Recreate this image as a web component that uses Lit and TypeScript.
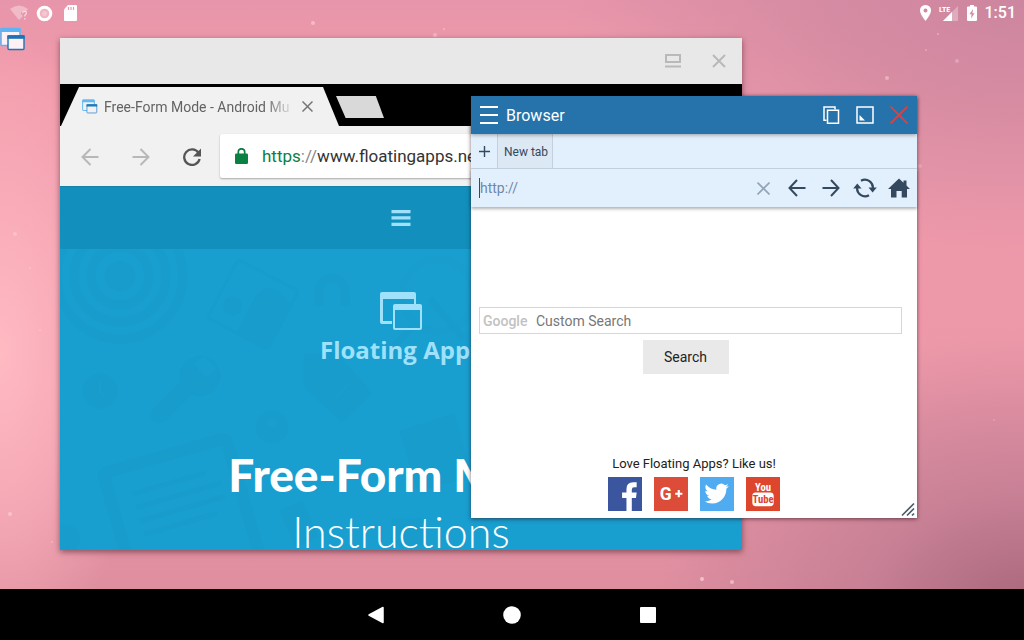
import { LitElement, html, css, svg } from "lit";
import { customElement, property } from "lit/decorators.js";

const twoWindows = (back: string, front: string, fill: string, frontBar = front) => svg`
  <path d="M1.5 1h18v3.5h-18z" fill=${back} />
  <rect x="1" y="1.5" width="19" height="17" rx="1" fill=${fill} stroke=${back} stroke-width="1.6" />
  <path d="M.5 1h20v4H.5z" fill=${back} />
  <rect x="8" y="9" width="16" height="13.5" rx="1" fill=${fill} stroke=${front} stroke-width="1.4" />
  <path d="M7.3 8.2h17.4v3.6H7.3z" fill=${frontBar} />`;

const reset = css`
  :host { box-sizing: border-box; font-family: Roboto, sans-serif; }
  *, *::before, *::after { box-sizing: border-box; }
  button { border: 0; padding: 0; margin: 0; background: none; font: inherit; color: inherit; display: grid; place-items: center; cursor: pointer; }
  input { border: 0; padding: 0; margin: 0; background: none; font: inherit; outline: 0; min-width: 0; }
  svg { display: block; }
`;

@customElement("status-bar")
class StatusBar extends LitElement {
  @property() time = "1:51";
  static styles = [reset, css`
    :host { display: flex; align-items: center; justify-content: space-between; height: 26px; padding: 0 8px 0 10px; color: #fff; }
    .group { display: flex; align-items: center; gap: 8px; }
    .time { font-size: 16px; font-weight: 500; line-height: 26px; }
    .lte { font-size: 8px; font-weight: 700; font-family: "Roboto Condensed", Roboto, sans-serif; }
  `];
  render() {
    return html`
      <div class="group">
        <svg width="18" height="16" viewBox="0 0 18 16"><path d="M0 4Q9-3 18 4L16 7Q11 5 11 9L13 11 9 15Z" fill="#fff" opacity=".35"/><path d="M12.5 8.2q.2-1.800 2-1.800t2 1.700q0 1.200-1.700 2.200v1.300M14.800 13v1.400" fill="none" stroke="#fff" stroke-width="1.200" opacity=".65"/></svg>
        <svg width="17" height="17" viewBox="0 0 17 17"><circle cx="8.500" cy="8.500" r="6.300" fill="#fff" fill-opacity=".3" stroke="#fff" stroke-width="3"/><circle cx="8.500" cy="8.500" r="2.500" fill="#fff" opacity=".25"/></svg>
        <svg width="18" height="16" viewBox="0 0 18 16"><path d="M7 0h8q1 0 1 1v14q0 1-1 1H4q-1 0-1-1V4.500z" fill="#fff"/><path d="M7.500 2v3M10 2v3M12.500 2v3" stroke="#e79ab0" stroke-width="1.200"/></svg>
      </div>
      <div class="group">
        <svg width="11" height="16" viewBox="0 0 11 16"><path fill-rule="evenodd" d="M5.500 0A5.300 5.300 0 0 1 11 5.500Q11 9 5.500 16Q0 9 0 5.500A5.300 5.300 0 0 1 5.500 0M5.500 3.500a2 2 0 1 0 0 4a2 2 0 0 0 0-4" fill="#fff"/></svg>
        <svg width="20" height="18" viewBox="0 0 20 18"><path d="M19 2v15H4z" fill="#fff" opacity=".3"/><path d="M13 8v9H4z" fill="#fff"/><text class="lte" x="0" y="8" fill="#fff">LTE</text></svg>
        <svg width="10" height="16" viewBox="0 0 10 16"><path fill="#fff" d="M3 0h4v1.500h2q1 0 1 1V15q0 1-1 1H1q-1 0-1-1V2.500q0-1 1-1h2z"/><path d="M6 4L2.500 9.300H4.600L4 13.500 7.600 8.200H5.500z" fill="#d58aa2"/></svg>
        <span class="time">${this.time}</span>
      </div>`;
  }
}

@customElement("chrome-window")
class ChromeWindow extends LitElement {
  static styles = [reset, css`
    :host { display: flex; flex-direction: column; overflow: hidden; background: #f1f1f1; box-shadow: 0 2px 6px rgba(60, 20, 30, .55); }
    .caption { flex: none; display: flex; justify-content: flex-end; align-items: center; height: 46px; background: #e8e8e8; }
    .caption button { width: 46px; height: 46px; color: #b9b9b9; }
    .strip { flex: none; display: flex; align-items: flex-end; height: 42px; background: #000; padding-left: 1px; }
    .tab { display: flex; align-items: center; width: 278px; height: 39px; padding: 0 24px 0 21px; background: #f1f1f1; clip-path: polygon(18px 0, calc(100% - 16px) 0, 100% 100%, 0 100%); }
    .label { flex: 1; white-space: nowrap; margin: 0 4px 0 6px; font-size: 14px; line-height: 20px; color: #636363; mask-image: linear-gradient(to right, #000 84%, transparent); }
    .tab button { width: 16px; height: 24px; color: #757575; }
    .add { align-self: center; margin-top: 4px; margin-left: -3px; width: 48px; height: 22px; background: #d9d9d9; clip-path: polygon(0 0, 83% 0, 100% 100%, 20% 100%); }
    .tools { flex: none; display: flex; align-items: center; height: 60px; padding-left: 4px; background: #f1f1f1; }
    .tools .nav { width: 51px; height: 44px; padding-top: 2px; color: #b8b8b8; }
    .tools .dark { color: #555; }
    .address { display: flex; align-items: center; flex: 1; height: 44px; margin-left: 3px; padding-left: 15px; background: #fff; border-radius: 2px; box-shadow: 0 1px 2px rgba(0, 0, 0, .3); font-size: 17px; color: #333; white-space: nowrap; overflow: hidden; }
    .url { margin-left: 14px; }
    .secure { color: #0b8043; }
    .dim { color: #888; }
    .site { flex: 1; min-height: 0; position: relative; background: #189ecf; overflow: hidden; text-align: center; color: #fff; }
    .bar { height: 63px; background: #128fbc; display: grid; place-items: center; color: #9fe1fb; border-top: 1px solid #1682a9; }
    .bar button { width: 44px; height: 44px; }
    .hero { position: relative; display: flex; flex-direction: column; align-items: center; padding-top: 42px; }
    .pattern { position: absolute; left: 0; top: 0; fill: #1797c6; stroke: #1797c6; opacity: .28; }
    .hero > :not(.pattern) { position: relative; }
    .brand { margin: 2px 0 0; font: 700 24px/34px "Open Sans", sans-serif; color: #9fe1fb; }
    h1 { margin: 78px 0 0; font: 900 46px/60px Lato, sans-serif; white-space: nowrap; }
    h2 { margin: 7px 0 0; font: 300 43px/40px Lato, sans-serif; white-space: nowrap; }
  `];
  render() {
    return html`
      <header class="caption">
        <button aria-label="Maximize"><svg width="16" height="14" viewBox="0 0 16 14" fill="none" stroke="currentColor" stroke-width="2"><path d="M1 1h14v7H1zM0 12.500h16"/></svg></button>
        <button aria-label="Close window"><svg width="14" height="14" viewBox="0 0 14 14" stroke="currentColor" stroke-width="2"><path d="M1 1l12 12M13 1L1 13"/></svg></button>
      </header>
      <div class="strip">
        <div class="tab">
          <svg width="16" height="15" viewBox="0 0 26 24">${twoWindows("#62b8f2", "#4a94cf", "#f1f1f1", "#1c78b8")}</svg>
          <span class="label">Free-Form Mode - Android Mu</span>
          <button aria-label="Close tab"><svg width="11" height="11" viewBox="0 0 11 11" stroke="currentColor" stroke-width="1.500"><path d="M.5.5l10 10M10.500.5l-10 10"/></svg></button>
        </div>
        <button class="add" aria-label="New tab"></button>
      </div>
      <div class="tools">
        <button class="nav" aria-label="Back"><svg width="18" height="18" viewBox="0 0 18 18" fill="none" stroke="currentColor" stroke-width="2"><path d="M17.500 9H1.500M9.500 1L1.500 9l8 8"/></svg></button>
        <button class="nav" aria-label="Forward"><svg width="18" height="18" viewBox="0 0 18 18" fill="none" stroke="currentColor" stroke-width="2"><path d="M.5 9h16M8.500 1l8 8-8 8"/></svg></button>
        <button class="nav dark" aria-label="Reload"><svg width="18" height="18" viewBox="0 0 18 18" fill="none" stroke="currentColor" stroke-width="2.300"><path d="M15.500 4.800A7.800 7.800 0 1 0 16.600 11"/><path d="M18 .5v8h-8z" fill="currentColor" stroke="none"/></svg></button>
        <button class="address" aria-label="Address">
          <svg width="13" height="16" viewBox="0 0 13 16"><rect y="5.500" width="13" height="10.500" rx="1.200" fill="#0b8043"/><path d="M3.300 6V4a3.200 3.200 0 0 1 6.400 0v2" fill="none" stroke="#0b8043" stroke-width="1.700"/></svg>
          <span class="url"><span class="secure">https</span><span class="dim">://</span>www.floatingapps.net</span>
        </button>
      </div>
      <main class="site">
        <div class="bar"><button aria-label="Menu"><svg width="20" height="16" viewBox="0 0 20 16" fill="currentColor"><path d="M.5 0h19v3.300H.5zM.5 6.300h19v3.300H.5zM.5 12.700h19V16H.5z"/></svg></button></div>
        <section class="hero">
          <svg class="pattern" width="682" height="302" viewBox="0 0 682 302" aria-hidden="true">
            <g fill="none" stroke-width="9"><circle cx="60" cy="27" r="63"/><circle cx="60" cy="27" r="46"/><circle cx="60" cy="27" r="29"/></g><circle cx="60" cy="27" r="15"/>
            <g transform="rotate(28 192 55)"><rect x="159" y="22" width="68" height="66" rx="4" fill="none" stroke-width="3"/><circle cx="176" cy="66" r="9"/><path d="M192 86V50q0-20 18-18l14 4v50z"/></g>
            <path d="M255 56V42a17 17 0 0 1 34 0v14h-8V42a9 9 0 0 0-18 0v14z"/>
            <g fill="none" stroke-width="7"><circle cx="378" cy="46" r="36" opacity=".5"/><path d="M352 78l-24 26M370 50l34 40"/></g>
            <circle cx="40" cy="142" r="17"/><path d="M40 133v10l5 5" stroke="#189ecf" stroke-width="2" fill="none"/>
            <circle cx="140" cy="127" r="20"/><path d="M127 138l-28 28" stroke-width="17" stroke-linecap="round"/><path d="M138 112h18v14h-18z" fill="#189ecf" stroke="none" transform="rotate(45 148 116)"/>
            <path d="M244 138v-32l32-2 36 40-30 29z"/><path d="M275 150l14-16" stroke="#189ecf" stroke-width="2"/>
            <circle cx="212" cy="178" r="16"/><circle cx="212" cy="174" r="5" fill="#189ecf" stroke="none"/>
            <g transform="rotate(-16 120 250)"><rect x="53" y="204" width="128" height="130" rx="4" fill="none" stroke-width="12"/><path d="M76 232h76M76 246h88M76 260h88M76 274h76" stroke-width="5"/></g>
            <path d="M340 182l54-17 18 62-54 15z"/><path d="M220 262l22-10 16 36-22 10z"/><rect x="332" y="270" width="34" height="26"/>
            <circle cx="6" cy="290" r="14"/>
          </svg>
          <svg width="44" height="40" viewBox="0 0 44 40"><path fill="#9fe1fb" fill-rule="evenodd" d="M3 1h32q2 0 2 2v10h-2V8H4v22h9v3H3q-2 0-2-2V3q0-2 2-2M16 13h25q2 0 2 2v22q0 2-2 2H16q-2 0-2-2V15q0-2 2-2m0 6v18h25V19z"/></svg>
          <p class="brand">Floating Apps</p>
          <h1>Free-Form Mode</h1>
          <h2>Instructions</h2>
        </section>
      </main>`;
  }
}

@customElement("floating-browser")
class FloatingBrowser extends LitElement {
  static styles = [reset, css`
    :host { display: flex; flex-direction: column; background: #fff; box-shadow: 0 1px 4px rgba(40, 10, 20, .6); }
    .title { display: flex; align-items: center; height: 38px; padding: 0 1px 0 9px; background: #2573aa; color: #fff; position: relative; box-shadow: 0 1px 4px rgba(0, 0, 0, .35); }
    .title span { flex: 1; margin-left: 8px; padding-top: 2px; font-size: 16px; line-height: 24px; }
    .icon { width: 34px; height: 34px; }
    .red { color: #e53e3e; }
    .tabs { display: flex; height: 35px; background: #e2f0fd; border-bottom: 1px solid #c5d3df; color: #34495e; }
    .plus { width: 26px; padding-top: 1px; }
    .tab { padding: 2px 4px 0 6px; font-size: 12px; background: #dce8f4; border: solid #c3d0dd; border-width: 0 1px; }
    .address { display: flex; align-items: center; height: 38px; padding: 0 1px 0 8px; background: #e2f0fd; color: #34495e; position: relative; box-shadow: 0 2px 3px rgba(0, 0, 0, .3); }
    .caret { width: 1px; height: 20px; background: #34495e; }
    .address input { flex: 1; font-size: 14px; line-height: 20px; color: #7088a8; }
    .faded { color: #93a4b5; }
    .page { flex: 1; display: flex; flex-direction: column; padding: 100px 15px 0 8px; }
    .search { display: grid; gap: 6px; }
    .field { display: flex; align-items: center; height: 27px; border: 1px solid #d6d6d6; padding-left: 3px; }
    .google { width: 53px; font-size: 14px; font-weight: 500; color: #c2c2c2; }
    .field input { flex: 1; font-size: 14px; color: #333; }
    .field input::placeholder { color: #777; opacity: 1; }
    .go { justify-self: center; margin-right: 10px; width: 86px; height: 34px; background: #e9e9e9; color: #222; font-size: 14px; }
    footer { margin: auto -7px 7px 0; text-align: center; font-size: 13px; line-height: 16px; color: #222; }
    .social { display: flex; justify-content: center; gap: 12px; margin-top: 5px; }
    .gp { font: 700 18px Roboto, sans-serif; }
    .yt { font: 700 11px "Roboto Condensed", Roboto, sans-serif; }
    .grip { position: absolute; right: 1px; bottom: 1px; }
  `];
  render() {
    return html`
      <header class="title">
        <svg width="18" height="18" viewBox="0 0 18 18" fill="#fff"><path d="M0 0h18v2H0zM0 8h18v2H0zM0 16h18v2H0z"/></svg>
        <span>Browser</span>
        <button class="icon" aria-label="Duplicate"><svg width="18" height="18" viewBox="0 0 18 18" fill="none" stroke="currentColor" stroke-width="1.500"><path d="M4.500 14.200H2V1h11v2.500"/><path d="M5.500 4.200h11v13h-11z"/></svg></button>
        <button class="icon" aria-label="Maximize"><svg width="18" height="18" viewBox="0 0 18 18" fill="none" stroke="currentColor" stroke-width="1.500"><path d="M1 1h16v16H1z"/><path d="M3.500 9v5.500H9z" fill="currentColor" stroke="none"/></svg></button>
        <button class="icon red" aria-label="Close"><svg width="18" height="18" viewBox="0 0 18 18" stroke="currentColor" stroke-width="1.800"><path d="M.5.5l17 17M17.500.5l-17 17"/></svg></button>
      </header>
      <div class="tabs">
        <button class="plus" aria-label="Add tab"><svg width="11" height="11" viewBox="0 0 11 11" stroke="currentColor" stroke-width="1.400"><path d="M5.500 0v11M0 5.500h11"/></svg></button>
        <button class="tab">New tab</button>
      </div>
      <div class="address">
        <i class="caret"></i><input aria-label="Address" value="http://" />
        <button class="icon faded" aria-label="Clear"><svg width="13" height="13" viewBox="0 0 13 13" stroke="currentColor" stroke-width="1.600"><path d="M.5.5l12 12M12.500.5l-12 12"/></svg></button>
        <button class="icon" aria-label="Back"><svg width="18" height="18" viewBox="0 0 18 18" fill="none" stroke="currentColor" stroke-width="2"><path d="M17.500 9H1.500M9 1L1.500 9 9 17"/></svg></button>
        <button class="icon" aria-label="Forward"><svg width="18" height="18" viewBox="0 0 18 18" fill="none" stroke="currentColor" stroke-width="2"><path d="M.5 9h16M9 1l7.500 8L9 17"/></svg></button>
        <button class="icon" aria-label="Reload"><svg width="24" height="20" viewBox="0 0 24 20" fill="none" stroke="currentColor" stroke-width="2.200"><path d="M8 2.800A8 8 0 0 1 19.800 11M16 17.200A8 8 0 0 1 4.200 9"/><path d="M15.500 9.500h8.300l-4.200 5zM.2 10.500h8.300l-4.200-5z" fill="currentColor" stroke="none"/></svg></button>
        <button class="icon" aria-label="Home"><svg width="22" height="20" viewBox="0 0 22 20" fill="currentColor"><path d="M11 .5L15.500 4.700V2.500h3v5L22 11h-3v8.500h-5.300V13H8.500v6.500H3V11H0z"/></svg></button>
      </div>
      <main class="page">
        <form class="search" @submit=${(e: Event) => e.preventDefault()}>
          <label class="field"><span class="google">Google</span><input type="text" placeholder="Custom Search" /></label>
          <button class="go">Search</button>
        </form>
        <footer>
          Love Floating Apps? Like us!
          <nav class="social">
            <a href="#facebook" aria-label="Facebook"><svg width="34" height="34" viewBox="0 0 35 35"><path fill="#3b559f" d="M0 0h35v35H0z"/><path fill="#fff" d="M19 35V21.500h-4.500V16H19v-3.500Q19 5.500 26 5.500h3.500v5H27q-2.500 0-2.500 2.500v3h5l-.7 5.500h-4.300V35z"/></svg></a>
            <a href="#googleplus" aria-label="Google Plus"><svg width="34" height="34" viewBox="0 0 35 35"><path fill="#dd4b39" d="M0 0h35v35H0z"/><text class="gp" x="6" y="24" fill="#fff">G</text><path d="M25.500 13.500v7.400M21.800 17.200h7.400" stroke="#fff" stroke-width="2.200"/></svg></a>
            <a href="#twitter" aria-label="Twitter"><svg width="34" height="34" viewBox="0 0 35 35"><path fill="#50abf1" d="M0 0h35v35H0z"/><path fill="#fff" transform="translate(4.500 4.500) scale(1.050)" d="M23.950 4.570a10 10 0 0 1-2.820.77 4.960 4.960 0 0 0 2.160-2.720c-.95.550-2 .950-3.120 1.180a4.920 4.920 0 0 0-8.380 4.480C7.690 8.100 4.070 6.130 1.640 3.160a4.920 4.920 0 0 0 1.520 6.570 4.900 4.900 0 0 1-2.220-.61v.06a4.920 4.920 0 0 0 3.940 4.830 5 5 0 0 1-2.210.08 4.930 4.930 0 0 0 4.600 3.420A9.870 9.870 0 0 1 0 19.540a14 14 0 0 0 7.550 2.210c9.050 0 14-7.500 14-13.980 0-.21 0-.42-.02-.63a9.940 9.940 0 0 0 2.420-2.570z"/></svg></a>
            <a href="#youtube" aria-label="YouTube"><svg width="34" height="34" viewBox="0 0 35 35"><path fill="#dd452c" d="M0 0h35v35H0z"/><text class="yt" x="17.500" y="14" fill="#fff" text-anchor="middle">You</text><rect x="6.500" y="16" width="22" height="14" rx="3.500" fill="#fff"/><text class="yt" x="17.500" y="27" fill="#dd452c" text-anchor="middle">Tube</text></svg></a>
          </nav>
        </footer>
        <svg class="grip" width="15" height="15" viewBox="0 0 15 15" stroke="#4d5c6b" stroke-width="1.700"><path d="M1 13.500L13 1.500M6 13.500l7-7M11 13.500l2-2"/></svg>
      </main>`;
  }
}

const sparkles: [number, number, number, number][] = [
  [313, 23, 2, 0.6], [435, 35, 2, 0.5], [444, 29, 1, 0.5], [887, 78, 2, 0.5], [926, 50, 1, 0.4], [957, 61, 2, 0.35], [938, 34, 1, 0.5], [10, 514, 2, 0.6],
  [702, 579, 2, 0.7], [732, 582, 2, 0.6], [15, 234, 2, 0.5], [30, 268, 1, 0.4], [52, 542, 1, 0.4], [40, 330, 1, 0.4], [920, 166, 2, 0.3], [994, 420, 1, 0.3],
];

@customElement("app-root")
class AppRoot extends LitElement {
  static styles = [reset, css`
    :host { display: grid; grid-template-rows: auto 1fr auto; height: 100vh; overflow: hidden; position: relative;
      background:
        radial-gradient(ellipse 36% 44% at 100% 96%, #a8677c 0%, rgba(190, 122, 145, .7) 45%, rgba(200, 130, 150, 0) 100%),
        radial-gradient(ellipse 45% 40% at 100% 0%, #cd869f 0%, rgba(208, 136, 160, .8) 40%, rgba(208, 136, 160, 0) 100%),
        radial-gradient(ellipse 14% 50% at 0% 55%, #ffbac2 0%, rgba(255, 182, 192, .6) 50%, rgba(255, 180, 190, 0) 100%),
        linear-gradient(to bottom, #e795aa 0%, #f19bac 12%, #ec98a9 60%, #db8c9d 100%); }
    .sparkles { position: absolute; inset: 0; width: 100%; height: 100%; }
    .desktop { position: relative; }
    .bubble { position: absolute; left: 0; top: 1px; }
    chrome-window { position: absolute; left: 60px; top: 12px; width: 682px; height: 512px; }
    floating-browser { position: absolute; left: 471px; top: 70px; width: 446px; height: 422px; }
    .system { position: relative; display: flex; justify-content: center; gap: 92px; height: 51px; background: #000; }
    .system button { width: 44px; }
  `];
  render() {
    return html`
      <svg class="sparkles" viewBox="0 0 1024 640" preserveAspectRatio="xMidYMid slice" aria-hidden="true">
        ${sparkles.map(([x, y, r, o]) => svg`<circle cx=${x} cy=${y} r=${r} fill="#ffd3dc" opacity=${o} />`)}
      </svg>
      <status-bar></status-bar>
      <div class="desktop">
        <button class="bubble" aria-label="Floating Apps"><svg width="26" height="24" viewBox="0 0 26 24">${twoWindows("#5db4f5", "#1f72b5", "#fdf1f6")}</svg></button>
        <chrome-window></chrome-window>
        <floating-browser></floating-browser>
      </div>
      <nav class="system">
        <button aria-label="Back"><svg width="18" height="18" viewBox="0 0 18 18"><path d="M16 1.500v15L2 9z" fill="#fff" stroke="#fff" stroke-width="1.500" stroke-linejoin="round"/></svg></button>
        <button aria-label="Home"><svg width="18" height="18" viewBox="0 0 18 18"><circle cx="9" cy="9" r="8.800" fill="#fff"/></svg></button>
        <button aria-label="Recent apps"><svg width="18" height="18" viewBox="0 0 18 18"><rect x="1" y="1" width="16" height="16" rx="1" fill="#fff"/></svg></button>
      </nav>`;
  }
}
